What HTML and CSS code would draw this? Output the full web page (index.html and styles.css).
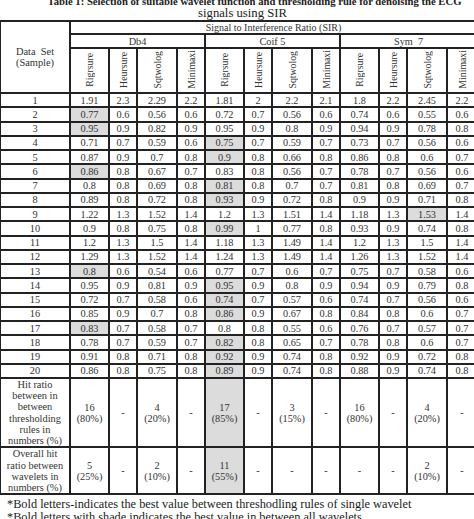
FILE: index.html
```html
<!DOCTYPE html>
<html>
<head>
<meta charset="utf-8">
<link rel="stylesheet" href="styles.css">
</head>
<body>
<div class="page">
<p class="title"><b class="t1">Table 1: Selection of suitable wavelet function and thresholding rule for denoising the ECG</b><br>signals using SIR</p>
<table class="sir">
<colgroup>
<col class="c0"><col class="cr"><col class="ch"><col class="cs"><col class="cm"><col class="cr"><col class="ch"><col class="cs"><col class="cm"><col class="cr"><col class="ch"><col class="cs"><col class="cm cl">
</colgroup>
<tr class="h1"><th rowspan="3" class="ds">Data&nbsp; Set<br>(Sample)</th><th colspan="12" class="sirh">Signal to Interference Ratio (SIR)</th></tr>
<tr class="h2"><th colspan="4">Db4</th><th colspan="4">Coif 5</th><th colspan="4">Sym&nbsp; 7</th></tr>
<tr class="h3">
<th><span class="rot">Rigrsure</span></th><th><span class="rot">Heursure</span></th><th><span class="rot">Sqtwolog</span></th><th><span class="rot">Minimaxi</span></th>
<th><span class="rot">Rigrsure</span></th><th><span class="rot">Heursure</span></th><th><span class="rot">Sqtwolog</span></th><th><span class="rot">Minimaxi</span></th>
<th><span class="rot">Rigrsure</span></th><th><span class="rot">Heursure</span></th><th><span class="rot">Sqtwolog</span></th><th><span class="rot">Minimaxi</span></th>
</tr>
<tr><td>1</td><td>1.91</td><td>2.3</td><td>2.29</td><td>2.2</td><td>1.81</td><td>2</td><td>2.2</td><td>2.1</td><td>1.8</td><td>2.2</td><td>2.45</td><td>2.2</td></tr>
<tr><td>2</td><td class="sh">0.77</td><td>0.6</td><td>0.56</td><td>0.6</td><td>0.72</td><td>0.7</td><td>0.56</td><td>0.6</td><td>0.74</td><td>0.6</td><td>0.55</td><td>0.6</td></tr>
<tr><td>3</td><td class="sh">0.95</td><td>0.9</td><td>0.82</td><td>0.9</td><td>0.95</td><td>0.9</td><td>0.8</td><td>0.9</td><td>0.94</td><td>0.9</td><td>0.78</td><td>0.8</td></tr>
<tr><td>4</td><td>0.71</td><td>0.7</td><td>0.59</td><td>0.6</td><td class="sh">0.75</td><td>0.7</td><td>0.59</td><td>0.7</td><td>0.73</td><td>0.7</td><td>0.56</td><td>0.6</td></tr>
<tr><td>5</td><td>0.87</td><td>0.9</td><td>0.7</td><td>0.8</td><td class="sh">0.9</td><td>0.8</td><td>0.66</td><td>0.8</td><td>0.86</td><td>0.8</td><td>0.6</td><td>0.7</td></tr>
<tr><td>6</td><td class="sh">0.86</td><td>0.8</td><td>0.67</td><td>0.7</td><td>0.83</td><td>0.8</td><td>0.56</td><td>0.7</td><td>0.78</td><td>0.7</td><td>0.56</td><td>0.6</td></tr>
<tr><td>7</td><td>0.8</td><td>0.8</td><td>0.69</td><td>0.8</td><td class="sh">0.81</td><td>0.8</td><td>0.7</td><td>0.7</td><td>0.81</td><td>0.8</td><td>0.69</td><td>0.7</td></tr>
<tr><td>8</td><td>0.89</td><td>0.8</td><td>0.72</td><td>0.8</td><td class="sh">0.93</td><td>0.9</td><td>0.72</td><td>0.8</td><td>0.9</td><td>0.9</td><td>0.71</td><td>0.8</td></tr>
<tr><td>9</td><td>1.22</td><td>1.3</td><td>1.52</td><td>1.4</td><td>1.2</td><td>1.3</td><td>1.51</td><td>1.4</td><td>1.18</td><td>1.3</td><td class="sh">1.53</td><td>1.4</td></tr>
<tr><td>10</td><td>0.9</td><td>0.8</td><td>0.75</td><td>0.8</td><td class="sh">0.99</td><td>1</td><td>0.77</td><td>0.8</td><td>0.93</td><td>0.9</td><td>0.74</td><td>0.8</td></tr>
<tr><td>11</td><td>1.2</td><td>1.3</td><td>1.5</td><td>1.4</td><td>1.18</td><td>1.3</td><td>1.49</td><td>1.4</td><td>1.2</td><td>1.3</td><td>1.5</td><td>1.4</td></tr>
<tr><td>12</td><td>1.29</td><td>1.3</td><td>1.52</td><td>1.4</td><td>1.24</td><td>1.3</td><td>1.49</td><td>1.4</td><td>1.26</td><td>1.3</td><td>1.52</td><td>1.4</td></tr>
<tr><td>13</td><td class="sh">0.8</td><td>0.6</td><td>0.54</td><td>0.6</td><td>0.77</td><td>0.7</td><td>0.6</td><td>0.7</td><td>0.75</td><td>0.7</td><td>0.58</td><td>0.6</td></tr>
<tr><td>14</td><td>0.95</td><td>0.9</td><td>0.81</td><td>0.9</td><td class="sh">0.95</td><td>0.9</td><td>0.8</td><td>0.9</td><td>0.94</td><td>0.9</td><td>0.79</td><td>0.8</td></tr>
<tr><td>15</td><td>0.72</td><td>0.7</td><td>0.58</td><td>0.6</td><td class="sh">0.74</td><td>0.7</td><td>0.57</td><td>0.6</td><td>0.74</td><td>0.7</td><td>0.56</td><td>0.6</td></tr>
<tr><td>16</td><td>0.85</td><td>0.9</td><td>0.7</td><td>0.8</td><td class="sh">0.86</td><td>0.9</td><td>0.67</td><td>0.8</td><td>0.84</td><td>0.8</td><td>0.6</td><td>0.7</td></tr>
<tr><td>17</td><td class="sh">0.83</td><td>0.7</td><td>0.58</td><td>0.7</td><td>0.8</td><td>0.8</td><td>0.55</td><td>0.6</td><td>0.76</td><td>0.7</td><td>0.57</td><td>0.7</td></tr>
<tr><td>18</td><td>0.78</td><td>0.7</td><td>0.59</td><td>0.7</td><td class="sh">0.82</td><td>0.8</td><td>0.65</td><td>0.7</td><td>0.78</td><td>0.8</td><td>0.6</td><td>0.7</td></tr>
<tr><td>19</td><td>0.91</td><td>0.8</td><td>0.71</td><td>0.8</td><td class="sh">0.92</td><td>0.9</td><td>0.74</td><td>0.8</td><td>0.92</td><td>0.9</td><td>0.72</td><td>0.8</td></tr>
<tr><td>20</td><td>0.86</td><td>0.8</td><td>0.75</td><td>0.8</td><td class="sh">0.89</td><td>0.9</td><td>0.74</td><td>0.8</td><td>0.88</td><td>0.9</td><td>0.74</td><td>0.8</td></tr>
<tr class="hit"><td class="lbl">Hit ratio<br>between in<br>between<br>thresholding<br>rules in<br>numbers (%)</td><td>16<br>(80%)</td><td>-</td><td>4<br>(20%)</td><td>-</td><td class="sh">17<br>(85%)</td><td>-</td><td>3<br>(15%)</td><td>-</td><td>16<br>(80%)</td><td>-</td><td>4<br>(20%)</td><td>-</td></tr>
<tr class="ovr"><td class="lbl">Overall hit<br>ratio between<br>wavelets in<br>numbers (%)</td><td>5<br>(25%)</td><td>-</td><td>2<br>(10%)</td><td>-</td><td class="sh">11<br>(55%)</td><td>-</td><td>-</td><td>-</td><td>-</td><td>-</td><td>2<br>(10%)</td><td>-</td></tr>
</table>
<p class="note">*Bold letters-indicates the best value between threshodling rules of single wavelet<br>*Bold letters with shade indicates the best value in between all wavelets</p>
</div>
</body>
</html>
```
FILE: styles.css
```css
html, body {
  margin: 0;
  padding: 0;
  background: #fff;
}
body {
  font-family: "Liberation Serif", "Times New Roman", serif;
  color: #222;
  overflow: hidden;
}
.page {
  width: 474px;
  height: 519px;
  overflow: hidden;
}
.title {
  margin: -5px 0 0;
  padding-left: 11px;
  text-align: center;
  font-size: 12.7px;
  line-height: 12px;
  white-space: nowrap;
}
.title .t1 {
  font-weight: bold;
  font-size: 10.7px;
  padding-left: 24px;
}
.sir {
  border-collapse: collapse;
  table-layout: fixed;
  width: 477px;
  margin: 1px 0 0 -1px;
}
.c0 { width: 70px; }
.cr { width: 39px; }
.ch { width: 28px; }
.cs { width: 40px; }
.cm { width: 28px; }
.cl { width: 30px; }
.sir th, .sir td {
  border: 2px solid #222;
  padding: 0;
  text-align: center;
  vertical-align: middle;
  font-weight: normal;
  font-size: 10.3px;
  line-height: 11px;
  color: #333;
}
.sir tr { height: 14.25px; }
.sir .h1 { height: 12px; }
.sir .h2 { height: 14px; }
.sir .h3 { height: 45px; }
.sir .hit { height: 69px; }
.sir .ovr { height: 47px; }
.sir .ds {
  font-size: 10.4px;
}
.sir .sirh {
  font-size: 10px;
}
.rot {
  display: inline-block;
  writing-mode: vertical-rl;
  transform: rotate(180deg);
  font-size: 9.8px;
}
.sir .sh {
  background: #dcdcdc;
}
.sir .lbl {
  font-size: 10.4px;
  line-height: 11.2px;
}
.note {
  margin: 3px 0 0 7px;
  font-size: 12.3px;
  line-height: 13px;
  white-space: nowrap;
}
```
